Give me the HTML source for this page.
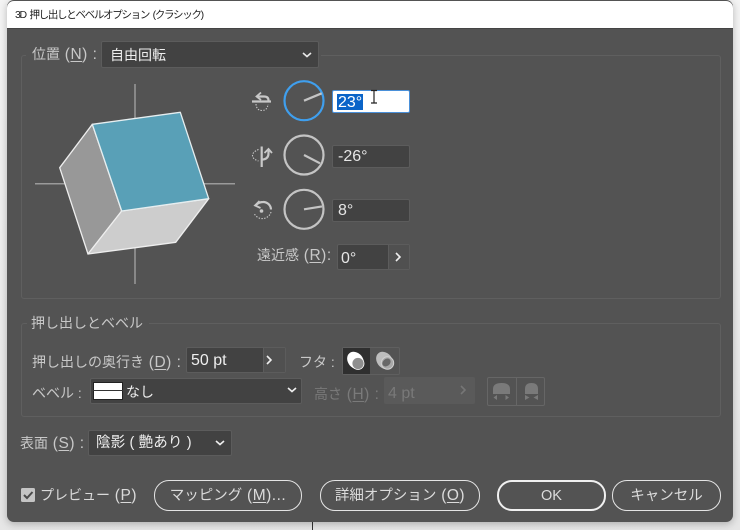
<!DOCTYPE html>
<html lang="ja"><head><meta charset="utf-8">
<style>
html,body{margin:0;padding:0;width:740px;height:530px;overflow:hidden;background:#ededed}
body{position:relative;font-family:"Liberation Sans","Noto Sans CJK JP",sans-serif;color:#d2d2d2;font-size:14px}
.a{position:absolute;white-space:nowrap;line-height:16px}
.box{position:absolute;box-sizing:border-box}
.f{background:#424242;border:1px solid #5c5c5c;border-radius:2px;box-sizing:border-box;position:absolute}
.btn{position:absolute;box-sizing:border-box;border:1.5px solid #e4e4e4;border-radius:15px;height:31px;text-align:center;line-height:31px;color:#dcdcdc;font-size:14.5px;white-space:nowrap}
.p{font-size:15.5px;letter-spacing:.5px;line-height:1}
.n{font-size:16px;line-height:16px}
u{text-underline-offset:2px}
svg{position:absolute;overflow:visible}
</style></head><body>
<div class="box" style="left:0;top:0;width:740px;height:530px;background:linear-gradient(#f4f4f4,#e6e6e6)"></div>
<div class="box" style="left:312px;top:522px;width:1px;height:8px;background:#333"></div>
<div class="box" style="left:312px;top:0;width:1px;height:1px;background:#333"></div>
<div class="box" style="left:7px;top:0;width:726px;height:522px;background:#535353;border-radius:7px;box-shadow:0 2px 8px rgba(0,0,0,.25)"></div>
<div class="box" style="left:7px;top:1px;width:726px;height:28px;background:#fff;border-radius:7px 7px 0 0;border-bottom:1px solid #444"></div>
<div class="a" style="left:15px;top:7px;font-size:10.5px;letter-spacing:-1.300px;word-spacing:2px;color:#222">3D 押し出しとベベルオプション (クラシック)</div>

<div class="box" style="left:21px;top:55px;width:700px;height:244px;border:1px solid #5f5f5f;border-radius:3px"></div>
<div class="box" style="left:26px;top:40px;width:295px;height:30px;background:#535353"></div>
<div class="a" style="left:32px;top:46px;font-size:14px;color:#c8c8c8">位置<span class="p"> (<u>N</u>) :</span></div>
<div class="f" style="left:101px;top:41px;width:218px;height:27px"></div>
<div class="a" style="left:110px;top:47px;color:#eee;font-size:14px">自由回転</div>
<svg style="left:0;top:0" width="740" height="530">
<path d="M303 53l4 3.500 4-3.500" fill="none" stroke="#e8e8e8" stroke-width="1.600"/>
<path d="M135 84V284M35 183.700H235" stroke="#9a9a9a" stroke-width="1.500"/>
<polygon points="92.300,124.300 59.700,167.700 88,254 121.700,211" fill="#989898" stroke="#eee" stroke-width="1.300" stroke-linejoin="round"/>
<polygon points="121.700,211 88,254 175.700,242.300 208.700,198.700" fill="#cdcdcd" stroke="#eee" stroke-width="1.300" stroke-linejoin="round"/>
<polygon points="92.300,124.300 180.300,112.300 208.700,198.700 121.700,211" fill="#59a0b7" stroke="#e6eef0" stroke-width="1.300" stroke-linejoin="round"/>

<circle cx="304" cy="100.700" r="19.500" fill="none" stroke="#3f9fee" stroke-width="2.200"/>
<path d="M304 100.700L321.700 93.300" stroke="#c4c4c4" stroke-width="2.200"/>
<circle cx="304" cy="155" r="19.500" fill="none" stroke="#c4c4c4" stroke-width="2.200"/>
<path d="M304 155L320 163.300" stroke="#c4c4c4" stroke-width="2.200"/>
<circle cx="304" cy="209.300" r="19.500" fill="none" stroke="#c4c4c4" stroke-width="2.200"/>
<path d="M304 209.300L322 206.400" stroke="#c4c4c4" stroke-width="2.200"/>

<!-- axis icons -->
<g fill="none" stroke="#c8c8c8" stroke-width="2.200">
<path d="M252 101.500H271"/>
<path d="M257 96.500H264Q268.500 96.500 268.500 100.500"/>
<path d="M261 92.500L256.500 96.500 261 100" stroke-width="1.800"/>
<path d="M256 104Q256.500 110.500 262 110.500T268 104" stroke-width="1.100" stroke-dasharray="1.400 1.400"/>
<path d="M261.700 146.500V167"/>
<path d="M262 159.500Q268.500 159.500 268.500 153V150"/>
<path d="M264.500 153L268.500 149 272 153" stroke-width="1.800"/>
<path d="M258.500 149.500Q252.500 152 252.500 155.500T258.500 161" stroke-width="1.100" stroke-dasharray="1.400 1.400"/>
<path d="M255.500 205.500Q258.500 202 263 202A7.800 7.800 0 0 1 271 209.500"/>
<path d="M259.500 201L255 205.500 260.500 208" stroke-width="1.800"/>
<path d="M271 212A9 9 0 0 1 254 213" stroke-width="1.100" stroke-dasharray="1.400 1.400"/>
</g>
<circle cx="261.500" cy="211" r="1.800" fill="#c8c8c8"/>
</svg>

<div class="f" style="left:332px;top:90px;width:78px;height:23px;background:#fff;border:1.500px solid #4a90d9"></div>
<div class="box" style="left:337px;top:94px;width:26px;height:16px;background:#0a64c8"></div>
<div class="a n" style="left:338px;top:95px;color:#fff">23°</div>
<svg style="left:0;top:0" width="740" height="530"><path d="M371 90.500h6M371 103h6M374 91V103" stroke="#222" stroke-width="1.200"/></svg>
<div class="f" style="left:332px;top:145px;width:78px;height:23px"></div>
<div class="a n" style="left:338px;top:149px;color:#e6e6e6">-26°</div>
<div class="f" style="left:332px;top:199px;width:78px;height:23px"></div>
<div class="a n" style="left:338px;top:203px;color:#e6e6e6">8°</div>

<div class="a" style="left:257px;top:247px;font-size:14px;color:#c8c8c8">遠近感<span class="p"> (<u>R</u>):</span></div>
<div class="f" style="left:337px;top:244px;width:73px;height:26px"></div>
<div class="box" style="left:388px;top:245px;width:21px;height:24px;background:#505050;border-left:1px solid #5c5c5c"></div>
<div class="a n" style="left:341px;top:251px;color:#e6e6e6">0°</div>
<svg style="left:0;top:0" width="740" height="530"><path d="M396 253l4 4-4 4" fill="none" stroke="#eee" stroke-width="1.600"/></svg>

<div class="box" style="left:21px;top:323px;width:700px;height:94px;border:1px solid #5f5f5f;border-radius:3px"></div>
<div class="box" style="left:27px;top:315px;width:122px;height:16px;background:#535353"></div>
<div class="a" style="left:31px;top:315px;font-size:14px;color:#c8c8c8">押し出しとベベル</div>

<div class="a" style="left:32px;top:354px;font-size:14px;color:#c8c8c8">押し出しの奥行き<span class="p"> (<u>D</u>) :</span></div>
<div class="f" style="left:186px;top:347px;width:100px;height:26px"></div>
<div class="box" style="left:263px;top:348px;width:22px;height:24px;background:#505050;border-left:1px solid #5c5c5c"></div>
<div class="a n" style="left:191px;top:353px;color:#eee">50 pt</div>
<div class="a" style="left:299px;top:354px;font-size:14px;color:#c8c8c8">フタ :</div>

<div class="box" style="left:342px;top:347px;width:58px;height:28px;border:1px solid #5f5f5f;border-radius:2px"></div>
<div class="box" style="left:343px;top:348px;width:27px;height:26px;background:#2f2f2f"></div>

<div class="a" style="left:32px;top:385px;font-size:14px;color:#c8c8c8">ベベル :</div>
<div class="f" style="left:90px;top:378px;width:212px;height:26px"></div>
<div class="box" style="left:93px;top:382px;width:30px;height:18px;background:#fff;border:1px solid #222"></div>
<div class="box" style="left:93px;top:390px;width:30px;height:1px;background:#333"></div>
<div class="a" style="left:126px;top:384px;color:#eee;font-size:14px">なし</div>

<div class="a" style="left:314px;top:386px;font-size:14px;color:#7a7a7a">高さ<span class="p"> (<u>H</u>) :</span></div>
<div class="box" style="left:384px;top:377px;width:91px;height:27px;background:#5a5a5a;border-radius:2px"></div>
<div class="a n" style="left:388px;top:386px;color:#797979">4 pt</div>
<div class="box" style="left:487px;top:377px;width:58px;height:29px;border:1px solid #666;border-radius:2px"></div>
<div class="box" style="left:516px;top:378px;width:1px;height:27px;background:#666"></div>

<div class="a" style="left:20px;top:435px;font-size:14px;color:#c8c8c8">表面<span class="p"> (<u>S</u>) :</span></div>
<div class="f" style="left:88px;top:430px;width:144px;height:26px"></div>
<div class="a" style="left:96px;top:435px;color:#eee;font-size:14.500px;letter-spacing:.15px">陰影 ( 艶あり )</div>

<svg style="left:0;top:0" width="740" height="530">
<path d="M267 356l4 4-4 4" fill="none" stroke="#eee" stroke-width="1.600"/>
<path d="M288 388l4 3.500 4-3.500" fill="none" stroke="#eee" stroke-width="1.600"/>
<path d="M216 441l4 3.500 4-3.500" fill="none" stroke="#eee" stroke-width="1.600"/>
<path d="M461 386l4 4-4 4" fill="none" stroke="#767676" stroke-width="1.600"/>
<!-- cap icons -->
<ellipse cx="355.500" cy="360.500" rx="7.500" ry="9.500" transform="rotate(-40 355.500 360.500)" fill="#fff"/>
<circle cx="358" cy="363.500" r="6" fill="#8f8f8f" stroke="#fff" stroke-width=".8"/>
<ellipse cx="384.500" cy="360.500" rx="7.500" ry="9.500" transform="rotate(-40 384.500 360.500)" fill="#bdbdbd"/>
<circle cx="387.500" cy="363" r="6.200" fill="#a8a8a8" stroke="#d0d0d0" stroke-width="1"/>
<ellipse cx="386.500" cy="362.500" rx="4.500" ry="3.500" transform="rotate(-40 386.500 362.500)" fill="#686868"/>
<!-- bevel icons -->
<path d="M493 394V389Q493 383 501.500 383T510 389V394Z" fill="#7a7a7a"/>
<path d="M497 395l-3.500 2.500 3.500 2.500zM505.500 395l3.500 2.500-3.500 2.500z" fill="#7a7a7a"/>
<path d="M525 394V389Q525 383 531.500 383T538 389V394Z" fill="#7a7a7a"/>
<path d="M525 395l4.500 2.500-4.500 2.500zM538 395l-4.500 2.500 4.500 2.500z" fill="#7a7a7a"/>
<!-- checkbox -->
<rect x="21" y="488" width="14" height="14" rx="1.500" fill="#c4c4c4"/>
<path d="M24 495l3 3 5.500-6" fill="none" stroke="#4a4a4a" stroke-width="2"/>
</svg>

<div class="a" style="left:40px;top:487px;font-size:14px;color:#dadada">プレビュー<span class="p"> (<u>P</u>)</span></div>
<div class="btn" style="left:154px;top:480px;width:148px">マッピング<span class="p"> (<u>M</u>)...</span></div>
<div class="btn" style="left:320px;top:480px;width:160px">詳細オプション<span class="p"> (<u>O</u>)</span></div>
<div class="btn" style="left:497px;top:480px;width:109px;border:2.500px solid #f0f0f0;line-height:29px">OK</div>
<div class="btn" style="left:612px;top:480px;width:109px">キャンセル</div>
</body></html>
